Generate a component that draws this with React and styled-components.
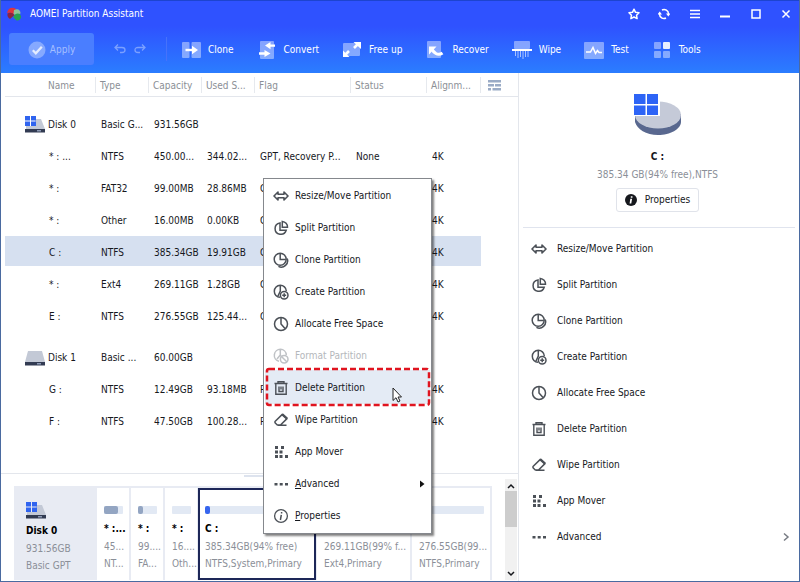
import React from "react";
import styled, { createGlobalStyle, css } from "styled-components";

const GlobalStyle = createGlobalStyle`
  *, *::before, *::after { box-sizing: border-box; }
  body { margin: 0; }
  body, button { font-family: "DejaVu Sans Condensed", "DejaVu Sans", sans-serif; font-size: 10px; line-height: 16px; color: #16181d; }
  button { margin: 0; padding: 0; border: 0; background: none; }
  h1, h2, p, ul { margin: 0; padding: 0; font-size: inherit; }
  ul { list-style: none; }
  svg { display: block; flex: none; }
`;

const Window = styled.div`
  display: flex;
  flex-direction: column;
  min-height: 100vh;
  border: 1px solid #4a6aa0;
  border-top: 0;
  background: #fff;
`;

const Header = styled.header`
  padding-bottom: 8px;
  border-top: 1px solid #1d44cf;
  background: linear-gradient(#2f52ff 0%, #2f52ff 35%, #2b7dff 100%);
  color: #fff;
`;

const TitleBar = styled.div`
  display: flex;
  align-items: center;
  gap: 8px;
  height: 25px;
  padding: 0 5px;
`;

const Title = styled.h1`
  flex: 1;
  font-weight: 400;
`;

const WindowActions = styled.div`
  display: flex;
  justify-content: space-between;
  width: 168px;
`;

const IconButton = styled.button`
  display: flex;
  justify-content: center;
  align-items: center;
  width: 16px;
  height: 16px;
  color: #fff;
`;

const Toolbar = styled.nav`
  display: flex;
  align-items: center;
  margin-top: 7px;
  padding-left: 8px;
`;

const ApplyButton = styled.button`
  display: flex;
  align-items: center;
  justify-content: center;
  gap: 4px;
  width: 85px;
  height: 32px;
  padding-top: 2px;
  border-radius: 3px;
  background: #4a7eff;
  color: #a4bfff;
`;

const History = styled.div`
  display: flex;
  gap: 4px;
  height: 24px;
  align-items: center;
  margin-left: 18px;
  padding-right: 18px;
  border-right: 1px solid #4672fb;
  ${IconButton} { color: #7ba0ff; }
`;

const Tools = styled.div`
  display: flex;
  gap: 23px;
  margin-left: 14px;
  padding-top: 2px;
`;

const ToolButton = styled.button`
  display: flex;
  align-items: center;
  gap: 7px;
  color: #fff;
`;

const Body = styled.main`
  flex: 1;
  display: grid;
  grid-template-columns: minmax(0, 1fr) 280px;
`;

const Left = styled.section`
  display: flex;
  flex-direction: column;
  border-right: 1px solid #e3e6ec;
`;

const TableArea = styled.div`
  position: relative;
  flex: 1;
`;

const Table = styled.table`
  width: 100%;
  padding-left: 4px;
  table-layout: fixed;
  border-spacing: 0;
  text-align: left;
  white-space: nowrap;
`;

const Col = styled.col`
  width: ${(p) => p.$w};
`;

const Th = styled.th`
  height: 24px;
  padding: 2px 0 0 ${(p) => (p.$first ? 43 : 4)}px;
  border-bottom: 1px solid #e3e6ec;
  color: #8b8f96;
  font-weight: 400;
  background: linear-gradient(#e6e9ee, #e6e9ee) right 4px / 1px 16px no-repeat;
  &:last-child { background: none; padding-left: 7px; }
`;

const Row = styled.tr`
  td { background: ${(p) => (p.$selected ? "#d6e0f0" : "#fff")}; }
  td:last-child { background: #fff; }
`;

const Cell = styled.td`
  height: 32px;
  padding: 3px 0 0 5px;
  border-bottom: 2px solid #fff;
  overflow: hidden;
  text-overflow: ellipsis;
  &:first-child { padding-left: 44px; }
`;

const Spacer = styled.td`
  height: ${(p) => p.$h}px;
  padding: 0;
`;

const DiskCell = styled(Cell)`
  &:first-child { padding-left: 20px; }
`;

const DiskName = styled.span`
  display: flex;
  align-items: center;
  gap: 3px;
`;

const Menu = styled.ul`
  position: absolute;
  left: 262px;
  top: 105px;
  width: 169px;
  padding: 1px;
  border: 1px solid #85888d;
  background: #fff;
  box-shadow: 2px 2px 2px rgba(0, 0, 0, 0.5);
  z-index: 2;
`;

const MenuItem = styled.li`
  position: relative;
`;

const MenuButton = styled.button`
  display: flex;
  align-items: center;
  gap: 6px;
  width: 100%;
  height: 32px;
  padding: 0 5px 0 8px;
  color: ${(p) => (p.disabled ? "#b4b7bb" : "inherit")};
  svg { color: ${(p) => (p.disabled ? "#bfc2c6" : "#4b5057")}; }
  span { flex: 1; text-align: left; }
  ${(p) => p.$active && css`background: #e4ebf5; box-shadow: 0 -2px #e4ebf5;`}
`;

const Highlight = styled.svg`
  position: absolute;
  left: 2px;
  top: -3px;
  width: 162px;
  height: 36px;
  overflow: visible;
  pointer-events: none;
`;

const Cursor = styled.svg`
  position: absolute;
  right: 28px;
  top: 15px;
`;

const MapPanel = styled.div`
  display: flex;
  border-top: 1px solid #e3e6ec;
  padding: 0 1px 1px 13px;
`;

const MapContent = styled.div`
  flex: 1;
  min-width: 0;
`;

const Grip = styled.div`
  width: 31px;
  height: 2px;
  margin: 1px auto 9px;
  background: #dde3ee;
`;

const DiskMap = styled.div`
  display: grid;
  grid-template-columns: 81px 32fr 32fr 32fr 116fr 93fr 78fr;
  column-gap: 2px;
  margin-right: 13px;
  border: 2px solid #e8ebf3;
  border-width: 2px 2px 0 0;
  background: #e8ebf3;
`;

const Block = styled.div`
  min-width: 0;
  height: 92px;
  padding: 18px 0 0 7px;
  background: #fff;
  color: #8b8f98;
  ${(p) => p.$selected && css`
    margin: 0 -1px;
    padding: 16px 0 0 5px;
    border: 2px solid #1d2758;
  `}
`;

const DiskBlock = styled.div`
  padding: 14px 0 0 12px;
  color: #8b8f98;
`;

const Line = styled.p`
  white-space: nowrap;
  line-height: 17px;
`;

const BlockName = styled(Line)`
  padding-top: ${(p) => (p.$disk ? 2 : 6)}px;
  line-height: 18px;
  color: #000;
  font-weight: 700;
`;

const Meter = styled.div`
  height: 8px;
  margin-right: 6px;
  border-radius: 1px;
  background: #e2e9f4;
`;

const Used = styled.div`
  height: 8px;
  border-radius: 2px;
  background: ${(p) => (p.$selected ? "#3665ee" : "#93a5c2")};
`;

const Scrollbar = styled.div`
  display: flex;
  flex-direction: column;
  align-items: center;
  justify-content: space-between;
  width: 12px;
  margin-top: 5px;
  padding: 2px 0;
  background: #f1f1f1;
`;

const Thumb = styled.div`
  width: 12px;
  height: 36px;
  background: #cdcdcd;
  margin-bottom: auto;
`;

const Side = styled.aside`
  padding: 20px 4px 0;
`;

const Summary = styled.div`
  display: flex;
  flex-direction: column;
  align-items: center;
  padding: 0 3px 15px 0;
  border-bottom: 1px solid #e0e4ee;
`;

const VolumeName = styled.h2`
  margin-top: 12px;
  font-weight: 700;
`;

const VolumeInfo = styled.p`
  margin-top: 2px;
  color: #8b8f98;
`;

const PropertiesButton = styled.button`
  display: flex;
  align-items: center;
  gap: 8px;
  height: 24px;
  margin-top: 5px;
  padding: 0 8px;
  border: 1px solid #e0e3ea;
  border-radius: 3px;
`;

const ActionList = styled.ul`
  padding-top: 3px;
`;

const ActionButton = styled.button`
  display: flex;
  align-items: center;
  gap: 10px;
  width: 100%;
  height: 36px;
  padding: 0 5px 0 8px;
  svg { color: #4b5057; }
  span { flex: 1; text-align: left; }
`;

const Svg = ({ w = 16, h = 16, children, ...rest }) => (
  <svg width={w} height={h} viewBox={`0 0 ${w} ${h}`} fill="none" stroke="currentColor" strokeWidth="1.5" aria-hidden="true" {...rest}>
    {children}
  </svg>
);

const icons = {
  resize: (
    <Svg strokeLinejoin="round" strokeWidth="1.6"><path d="M1 8 5 4v2.300h6V4L15 8l-4 4V9.700H5V12z" /></Svg>
  ),
  split: (
    <Svg><path d="M7 2.9a5.7 5.7 0 1 0 6.2 7.4H7z" /><path d="M9.3 1.4v5.9h5.2a5.6 5.6 0 0 0-5.2-5.9z" /></Svg>
  ),
  clone: (
    <Svg><circle cx="7.2" cy="7.2" r="6" /><path d="M7.2 1.5v6h5.6M14.2 6.4a6.4 6.4 0 0 1-8.8 8" /></Svg>
  ),
  create: (
    <Svg><path d="M13.3 7A6 6 0 1 0 7 13.3M7.3 1.3V7L5 12" /><circle cx="11.2" cy="11.2" r="3.8" /><path d="M11.2 9.2v4M9.2 11.2h4" /></Svg>
  ),
  allocate: (
    <Svg><circle cx="8" cy="8" r="6.5" /><path d="M8 1.5V8l4 4.6" /></Svg>
  ),
  format: (
    <Svg><path d="M13.3 7A6 6 0 1 0 6 13.2M7.3 1.3V7L4 11" /><circle cx="11.2" cy="11.2" r="3.8" /><path d="m7 7 7 7" /></Svg>
  ),
  trash: (
    <Svg><path d="M1.500 3.500h13M5 3.500V1.700h6v1.800M2.800 3.500v10.700h10.400V3.500M6 6.500v5h4v-5M8 6.500v3" strokeWidth="1.400" /></Svg>
  ),
  eraser: (
    <Svg strokeLinejoin="round"><path d="M2 9.5 9.3 2.4 14 6.6 7.5 13H4.3L2 10.8zM5 13.2h8.5" /><path d="m9.3 2.4 4.7 4.2" strokeWidth="2.4" /></Svg>
  ),
  mover: (
    <Svg fill="currentColor" stroke="none"><path d="M2 2h3v3H2zM8 2h3v3H8zM2 6.5h3v3H2zM6.5 6.5h3v3h-3zM2 11h3v3H2zM6.5 11h3v3h-3zM12 11h3v3h-3z" /></Svg>
  ),
  more: (
    <Svg fill="currentColor" stroke="none"><path d="M1.5 7h3v2.4h-3zM6.7 7h3v2.4h-3zM12 7h3v2.4h-3z" /></Svg>
  ),
  info: (
    <Svg><circle cx="8" cy="8" r="6.4" strokeWidth="1.3" /><path d="M8.6 4v1.6M8.3 6.8 7.4 12" /></Svg>
  ),
};

const Box = (props) => <rect fill="#fff" fillOpacity=".42" stroke="none" rx="1" {...props} />;

const toolIcons = {
  Clone: (
    <Svg w={20}>
      <Box x="1" width="7.5" height="16" /><Box x="10.5" width="9.5" height="16" />
      <path d="M4.5 8h8" strokeWidth="2.4" /><path d="M11 3.8 17 8l-6 4.2z" fill="#fff" stroke="none" />
    </Svg>
  ),
  Convert: (
    <Svg w={20} h={18}>
      <Box x="3" width="14" height="18" />
      <path d="M12 4.6h6M2 12.5h7" strokeWidth="2.4" /><path d="M13.5 1 8 4.6l5.5 3.6zM7.5 9l6 3.5-6 3.6z" fill="#fff" stroke="none" />
    </Svg>
  ),
  "Free up": (
    <Svg w={20} h={18}>
      <Box x="1" y="2" width="17" height="13" />
      <path d="m3 14 4-4M12 7l4-4" strokeWidth="2.6" /><path d="M1 9.5V16h6.5zM11.5 1H19v7z" fill="#fff" stroke="none" />
    </Svg>
  ),
  Recover: (
    <Svg w={20} h={18}>
      <Box x="2" width="14" height="17" />
      <path d="M6.5 7.5c2 4 6 8 11 4.5" strokeWidth="3" /><path d="M4 5.5h7.5L4 13.5z" fill="#fff" stroke="none" />
    </Svg>
  ),
  Wipe: (
    <Svg w={20} h={18}>
      <Box x="2" width="16" height="8" />
      <path d="M0 9h20" strokeWidth="2" />
      <path d="M3.5 10v5M6 10v7M8.5 10v6M11 10v8M13.5 10v6M16 10v6" strokeWidth="1" opacity=".6" />
    </Svg>
  ),
  Test: (
    <Svg w={20} h={17}>
      <Box width="20" height="17" /><path d="M2 10h4.5L9 5.5l2.5 6 2-3 1.5 2h3" />
    </Svg>
  ),
  Tools: (
    <Svg w={20}>
      <Box x="2" width="7" height="7" /><rect x="11" width="7" height="7" rx="1" fill="#e8efff" stroke="none" />
      <Box x="2" y="9" width="7" height="7" /><Box x="11" y="9" width="7" height="7" />
    </Svg>
  ),
};

const Logo = () => (
  <Svg stroke="none">
    <path d="M1 7C2 2 6 .5 10 3L8 8.500C5 6.500 3 6.500 1 7z" fill="#e0343c" />
    <path d="M1.500 7.500c3-1.500 5.500-.5 7 1.500L4 13C2 12 1 10 1.500 7.500z" fill="#8c2440" />
    <path d="M8 4c4-2 6.500 0 6.500 3.500L10 9.500 7.500 8z" fill="#8fc49a" />
    <path d="M9 8.500c3-2 6-.5 6 2.500 0 2-2 4-4.500 3.500L7 11z" fill="#27a34f" />
  </Svg>
);

const DiskIcon = ({ system }) => (
  <Svg w={20} h={18} stroke="none">
    <path d={system ? "M10 3h6l4 10H1V10h9z" : "M3 2h14l3 11H0z"} fill="#c3c9d6" />
    <path d="M0 13h20v3.500H0z" fill="#323b52" />
    <path d="M12 14h4v1.500h-4z" fill="#8d9ab5" />
    {system && <path d="M0 0h5v4.500H0zM6 0h5v4.500H6zM0 5.500h5V10H0zM6 5.500h5V10H6z" fill="#3064ef" />}
  </Svg>
);

const VolumeIcon = () => (
  <Svg w={48} h={44} stroke="none">
    <path d="M1 21v8c2 7 11 13 23 13s23-6 23-13v-8z" fill="#59688f" />
    <ellipse cx="24" cy="22" rx="23" ry="13.500" fill="#c5cad8" />
    <path d="M0 0h26v23H0z" fill="#fff" />
    <path d="M0 1h11.500v10H0zM13 1h11v10H13zM0 12.500h11.500V22H0zM13 12.500h11V22H13z" fill="#2d64f6" />
  </Svg>
);

const headers = ["Name", "Type", "Capacity", "Used S...", "Flag", "Status", "Alignm..."];

const disks = [
  {
    name: "Disk 0", type: "Basic G...", size: "931.56GB", system: true,
    rows: [
      ["* : ...", "NTFS", "450.00...", "344.02...", "GPT, Recovery P...", "None"],
      ["* :", "FAT32", "99.00MB", "28.86MB", "G", ""],
      ["* :", "Other", "16.00MB", "0.00KB", "G", ""],
      ["C :", "NTFS", "385.34GB", "19.91GB", "G", ""],
      ["* :", "Ext4", "269.11GB", "1.28GB", "G", ""],
      ["E :", "NTFS", "276.55GB", "125.44...", "G", ""],
    ],
  },
  {
    name: "Disk 1", type: "Basic ...", size: "60.00GB",
    rows: [
      ["G :", "NTFS", "12.49GB", "93.18MB", "P", ""],
      ["F :", "NTFS", "47.50GB", "100.28...", "P", ""],
    ],
  },
];

const actions = [
  ["resize", "Resize/Move Partition"],
  ["split", "Split Partition"],
  ["clone", "Clone Partition"],
  ["create", "Create Partition"],
  ["allocate", "Allocate Free Space"],
  ["format", "Format Partition"],
  ["trash", "Delete Partition"],
  ["eraser", "Wipe Partition"],
  ["mover", "App Mover"],
  ["more", "Advanced"],
  ["info", "Properties"],
];

const blocks = [
  { name: "* :...", size: "45...", kind: "NT...", used: 76 },
  { name: "* :", size: "99....", kind: "FA...", used: 24 },
  { name: "* :", size: "16....", kind: "Oth...", used: 0 },
  { name: "C :", size: "385.34GB(94% free)", kind: "NTFS,System,Primary", used: 5, selected: true },
  { name: "* :", size: "269.11GB(99% f...", kind: "Ext4,Primary", used: 1 },
  { name: "E :", size: "276.55GB(99...", kind: "NTFS,Primary", used: 0 },
];

const ContextMenu = () => (
  <Menu>
    {actions.map(([icon, label]) => {
      const mnemonic = icon === "more" || icon === "info";
      const active = icon === "trash";
      return (
        <MenuItem key={icon}>
          <MenuButton disabled={icon === "format"} $active={active}>
            {icons[icon]}
            <span>{mnemonic ? <><u>{label[0]}</u>{label.slice(1)}</> : label}</span>
            {icon === "more" && <Svg w={5} h={8} stroke="none"><path d="M0 0.500 4.500 4 0 7.500z" fill="#111" /></Svg>}
          </MenuButton>
          {active && (
            <>
              <Highlight aria-hidden="true">
                <rect width="100%" height="100%" rx="2" fill="none" stroke="#e0141f" strokeWidth="2.500" strokeDasharray="6 3" />
              </Highlight>
              <Cursor width="10" height="16" viewBox="0 0 10 16" aria-hidden="true">
                <path d="M1 1v12.500l3-2.800L6 15l2-1-2-4h3.500z" fill="#fff" stroke="#222" strokeWidth="1" />
              </Cursor>
            </>
          )}
        </MenuItem>
      );
    })}
  </Menu>
);

const PartitionTable = () => (
  <Table>
    <colgroup>
      <Col $w="18%" /><Col $w="53px" /><Col $w="53px" /><Col $w="53px" />
      <Col $w="96px" /><Col $w="76px" /><Col $w="54px" /><Col $w="37px" />
    </colgroup>
    <thead>
      <tr>
        {headers.map((h, i) => <Th key={h} $first={i === 0}>{h}</Th>)}
        <Th aria-label="Columns">
          <Svg w={13} h={12} stroke="none"><path d="M0 0h13v2.500H0zM0 4h6v2.500H0zM7 4h6v2.500H7zM0 8h3v2.500H0zM4.500 8H13v2.500H4.500z" fill="#9aabc6" /></Svg>
        </Th>
      </tr>
    </thead>
    {disks.map((d, n) => (
      <tbody key={d.name}>
        <tr><Spacer $h={n ? 9 : 11} colSpan={8} /></tr>
        <Row>
          <DiskCell><DiskName><DiskIcon system={d.system} />{d.name}</DiskName></DiskCell>
          <DiskCell>{d.type}</DiskCell>
          <DiskCell>{d.size}</DiskCell>
          <DiskCell colSpan={5} />
        </Row>
        {d.rows.map((r, i) => (
          <Row key={i} $selected={r[0] === "C :"}>
            {[...r, "4K"].map((c, j) => <Cell key={j}>{c}</Cell>)}
            <Cell />
          </Row>
        ))}
      </tbody>
    ))}
  </Table>
);

const MapView = () => (
  <MapPanel>
    <MapContent>
      <Grip />
      <DiskMap>
        <DiskBlock>
          <DiskIcon system />
          <BlockName $disk>Disk 0</BlockName>
          <Line>931.56GB</Line>
          <Line>Basic GPT</Line>
        </DiskBlock>
        {blocks.map((b, i) => (
          <Block key={i} $selected={b.selected}>
            <Meter><Used $selected={b.selected} style={{ width: `${b.used}%` }} /></Meter>
            <BlockName>{b.name}</BlockName>
            <Line>{b.size}</Line>
            <Line>{b.kind}</Line>
          </Block>
        ))}
      </DiskMap>
    </MapContent>
    <Scrollbar>
      <Svg w={8} h={10}><path d="m1 7 3-3 3 3" /></Svg>
      <Thumb />
      <Svg w={8} h={8}><path d="m1 2 3 3 3-3" /></Svg>
    </Scrollbar>
  </MapPanel>
);

const SidePanel = () => (
  <Side>
    <Summary>
      <VolumeIcon />
      <VolumeName>C :</VolumeName>
      <VolumeInfo>385.34 GB(94% free),NTFS</VolumeInfo>
      <PropertiesButton>
        <Svg w={12} h={12} stroke="none"><circle cx="6" cy="6" r="6" fill="#16181d" /><path d="M5.800 2.300h1.700v1.500H5.800zM5.300 4.800h1.800L6.300 9.500H4.600z" fill="#fff" /></Svg>
        Properties
      </PropertiesButton>
    </Summary>
    <ActionList>
      {actions.filter(([i]) => i !== "format" && i !== "info").map(([icon, label]) => (
        <li key={icon}>
          <ActionButton>
            {icons[icon]}
            <span>{label}</span>
            {icon === "more" && <Svg w={8} h={10}><path d="m2 1.500 4 3.500-4 3.500" stroke="#777b83" /></Svg>}
          </ActionButton>
        </li>
      ))}
    </ActionList>
  </Side>
);

export default function App() {
  return (
    <Window>
      <GlobalStyle />
      <Header>
        <TitleBar>
          <Logo />
          <Title>AOMEI Partition Assistant</Title>
          <WindowActions>
            <IconButton aria-label="Favorite"><Svg w={12} h={12} strokeLinejoin="round"><path d="m6 1.200 1.500 3.100 3.500.5-2.500 2.400.6 3.400L6 9l-3.100 1.600.6-3.400L1 4.800l3.500-.5z" /></Svg></IconButton>
            <IconButton aria-label="Refresh"><Svg w={12} h={12}><path d="M4 2a4.500 4.500 0 0 1 6.500 4M8 10a4.500 4.500 0 0 1-6.500-4" /><path d="M8 5.500h4.500L10.300 8.500zM-.5 6.500h4.500L1.700 3.500z" fill="#fff" stroke="none" /></Svg></IconButton>
            <IconButton aria-label="Menu"><Svg w={10} h={10}><path d="M0 1.500h10M0 5h10M0 8.500h10" /></Svg></IconButton>
            <IconButton aria-label="Minimize"><Svg w={10} h={10}><path d="M0 7.500h10" strokeWidth="2" /></Svg></IconButton>
            <IconButton aria-label="Maximize"><Svg w={10} h={10}><path d="M1 1h8v8H1z" /></Svg></IconButton>
            <IconButton aria-label="Close"><Svg w={10} h={10}><path d="m1.500 1.500 7 7M8.500 1.500l-7 7" /></Svg></IconButton>
          </WindowActions>
        </TitleBar>
        <Toolbar>
          <ApplyButton>
            <Svg w={18} h={18} stroke="none"><circle cx="9" cy="9" r="8.500" fill="#86a9ff" /><path d="m4.800 9.300 3 3 6-6.500" stroke="#e4ecff" strokeWidth="2.300" /></Svg>
            Apply
          </ApplyButton>
          <History>
            <IconButton aria-label="Undo"><Svg w={12} h={10} strokeWidth="1.300"><path d="M4 .5 1 3.500l3 3M1.500 3.500H8q3 0 3 2.500T8 8.500H6" /></Svg></IconButton>
            <IconButton aria-label="Redo"><Svg w={12} h={10} strokeWidth="1.300"><path d="m8 .5 3 3-3 3M10.500 3.500H4q-3 0-3 2.500t3 2.500h2" /></Svg></IconButton>
          </History>
          <Tools>
            {Object.entries(toolIcons).map(([label, icon]) => (
              <ToolButton key={label}>{icon}{label}</ToolButton>
            ))}
          </Tools>
        </Toolbar>
      </Header>
      <Body>
        <Left>
          <TableArea>
            <PartitionTable />
            <ContextMenu />
          </TableArea>
          <MapView />
        </Left>
        <SidePanel />
      </Body>
    </Window>
  );
}
